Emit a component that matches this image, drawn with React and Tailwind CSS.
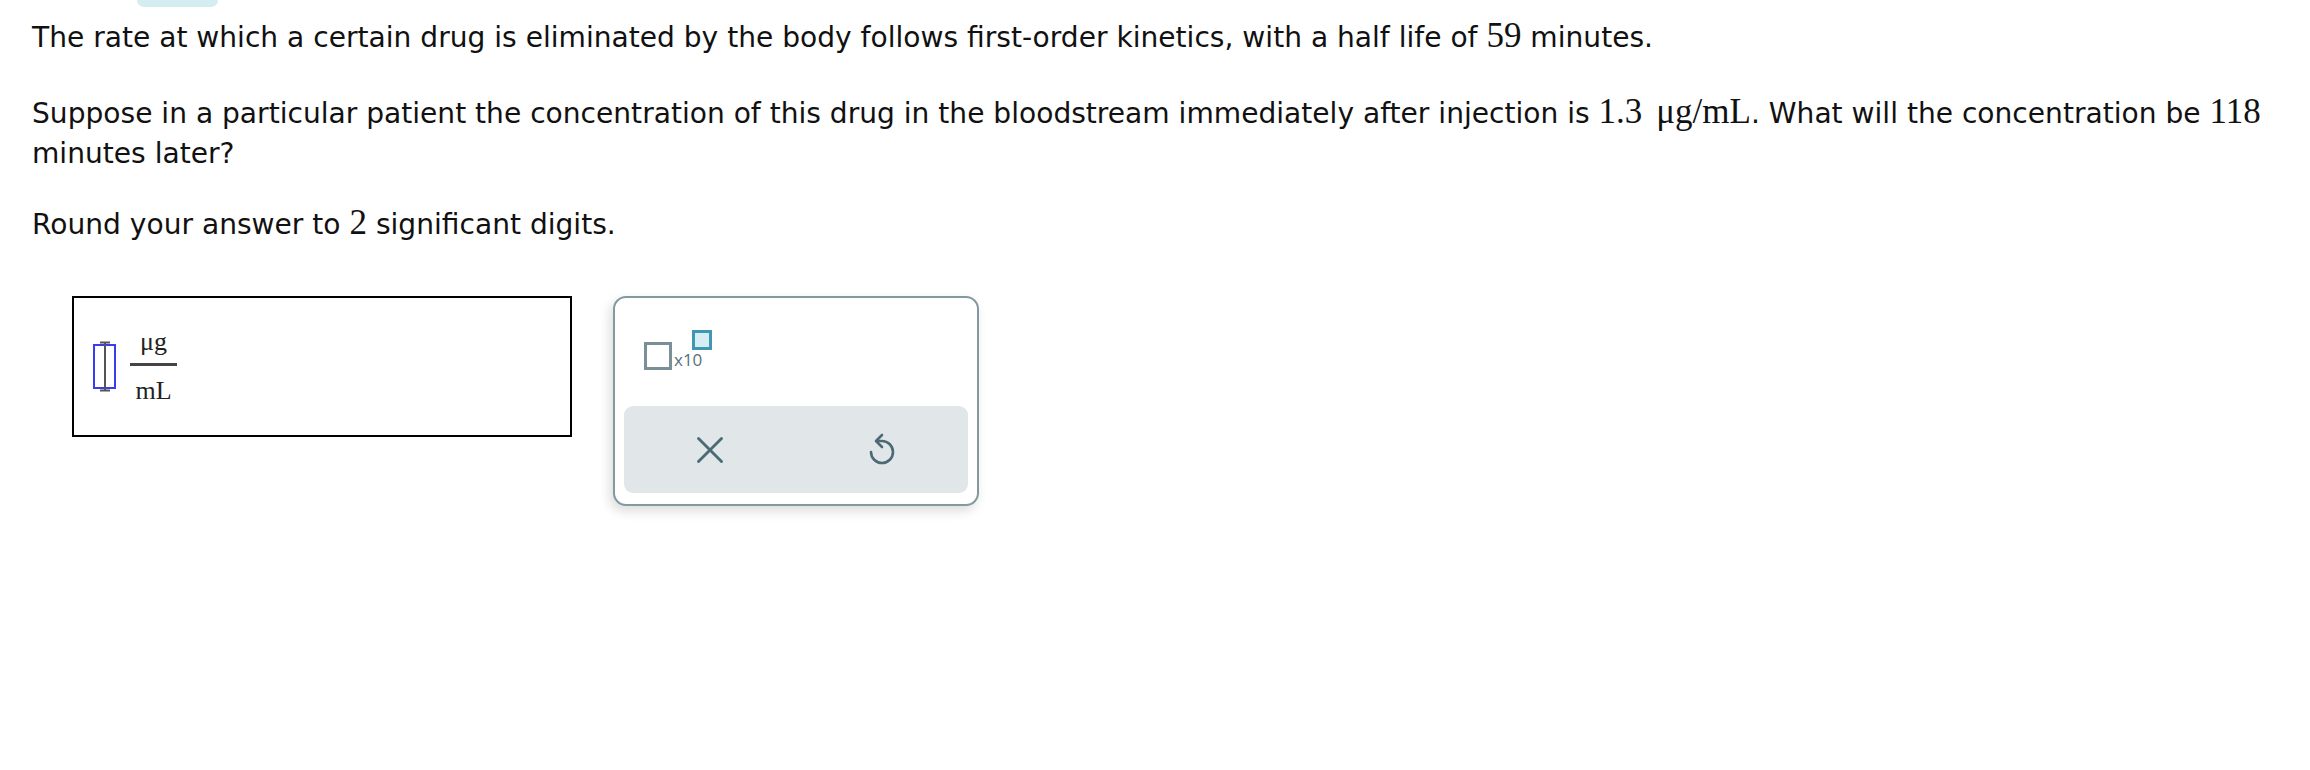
import { X } from 'lucide-react'

function MathText({ children, className = '' }) {
  return (
    <span className={`font-['Liberation_Serif',serif] text-[35px] leading-none ${className}`}>
      {children}
    </span>
  )
}

function CursorIcon() {
  return (
    <svg width="24" height="52" viewBox="0 0 24 52" className="shrink-0">
      <rect x="1" y="4" width="21" height="43" fill="none" stroke="#3b3bf2" strokeWidth="2" />
      <path d="M7 1.5h10M12 1.5v48M7 49.5h10" stroke="#555" strokeWidth="2" fill="none" />
    </svg>
  )
}

function UndoIcon() {
  return (
    <svg width="30" height="34" viewBox="0 0 30 34" fill="none" stroke="#4b6a76" strokeWidth="2.6" strokeLinecap="round" strokeLinejoin="round">
      <path d="M11 8h4a11 11 0 1 1-11 11" />
      <path d="M15 2 9 8l6 6" />
    </svg>
  )
}

export default function App() {
  return (
    <div className="min-h-[770px] bg-white px-[32px] font-['DejaVu_Sans',sans-serif] text-[28.1px] leading-[40px] text-[#111]">
      {/* top tab */}
      <div className="ml-[105px] h-[7px] w-[81px] rounded-b-[8px] bg-[#d4edf2]" />

      <p className="mt-[11px]">
        The rate at which a certain drug is eliminated by the body follows first-order kinetics, with a half life of <MathText>59</MathText> minutes.
      </p>

      <p className="mt-[36px]">
        Suppose in a particular patient the concentration of this drug in the bloodstream immediately after injection is <MathText>1.3</MathText>
        <MathText className="ml-[14px]">μg/mL</MathText>. What will the concentration be <MathText>118</MathText> minutes later?
      </p>

      <p className="mt-[31px]">
        Round your answer to <MathText>2</MathText> significant digits.
      </p>

      {/* answer area */}
      <div className="mt-[51px] ml-[40px] flex items-start gap-[41px]">
        <div className="flex h-[141px] w-[500px] items-center gap-[13px] border-[2px] border-black pl-[19px]">
          <CursorIcon />
          <div className="flex w-[47px] flex-col items-center font-['Liberation_Serif',serif] text-[26px] leading-[30px] text-[#222]">
            <span className="pb-[6px]">μg</span>
            <span className="h-[3px] w-full bg-[#444]" />
            <span className="pt-[10px]">mL</span>
          </div>
        </div>

        <div className="flex h-[210px] w-[366px] flex-col rounded-[13px] border-[2px] border-[#8299a2] bg-white shadow-[-3px_5px_12px_rgba(0,0,0,0.14)]">
          <div className="relative h-[108px]">
            <div className="absolute left-[29px] top-[44px] flex items-end">
              <div className="h-[28px] w-[28px] border-[3px] border-[#7a8f97]" />
              <span className="ml-[2px] font-['Open_Sans',sans-serif] text-[17px] leading-[20px] text-[#56707a]">x10</span>
            </div>
            <div className="absolute left-[77px] top-[32px] h-[20px] w-[20px] border-[3px] border-[#3f97b1] bg-[#d5eef3]" />
          </div>
          <div className="mx-[9px] mb-[10px] flex h-[87px] items-center rounded-[9px] bg-[#e1e6e8]">
            <div className="flex flex-1 items-center justify-center">
              <X size={46} strokeWidth={1.5} color="#4b6a76" />
            </div>
            <div className="flex flex-1 items-center justify-center">
              <UndoIcon />
            </div>
          </div>
        </div>
      </div>
    </div>
  )
}
